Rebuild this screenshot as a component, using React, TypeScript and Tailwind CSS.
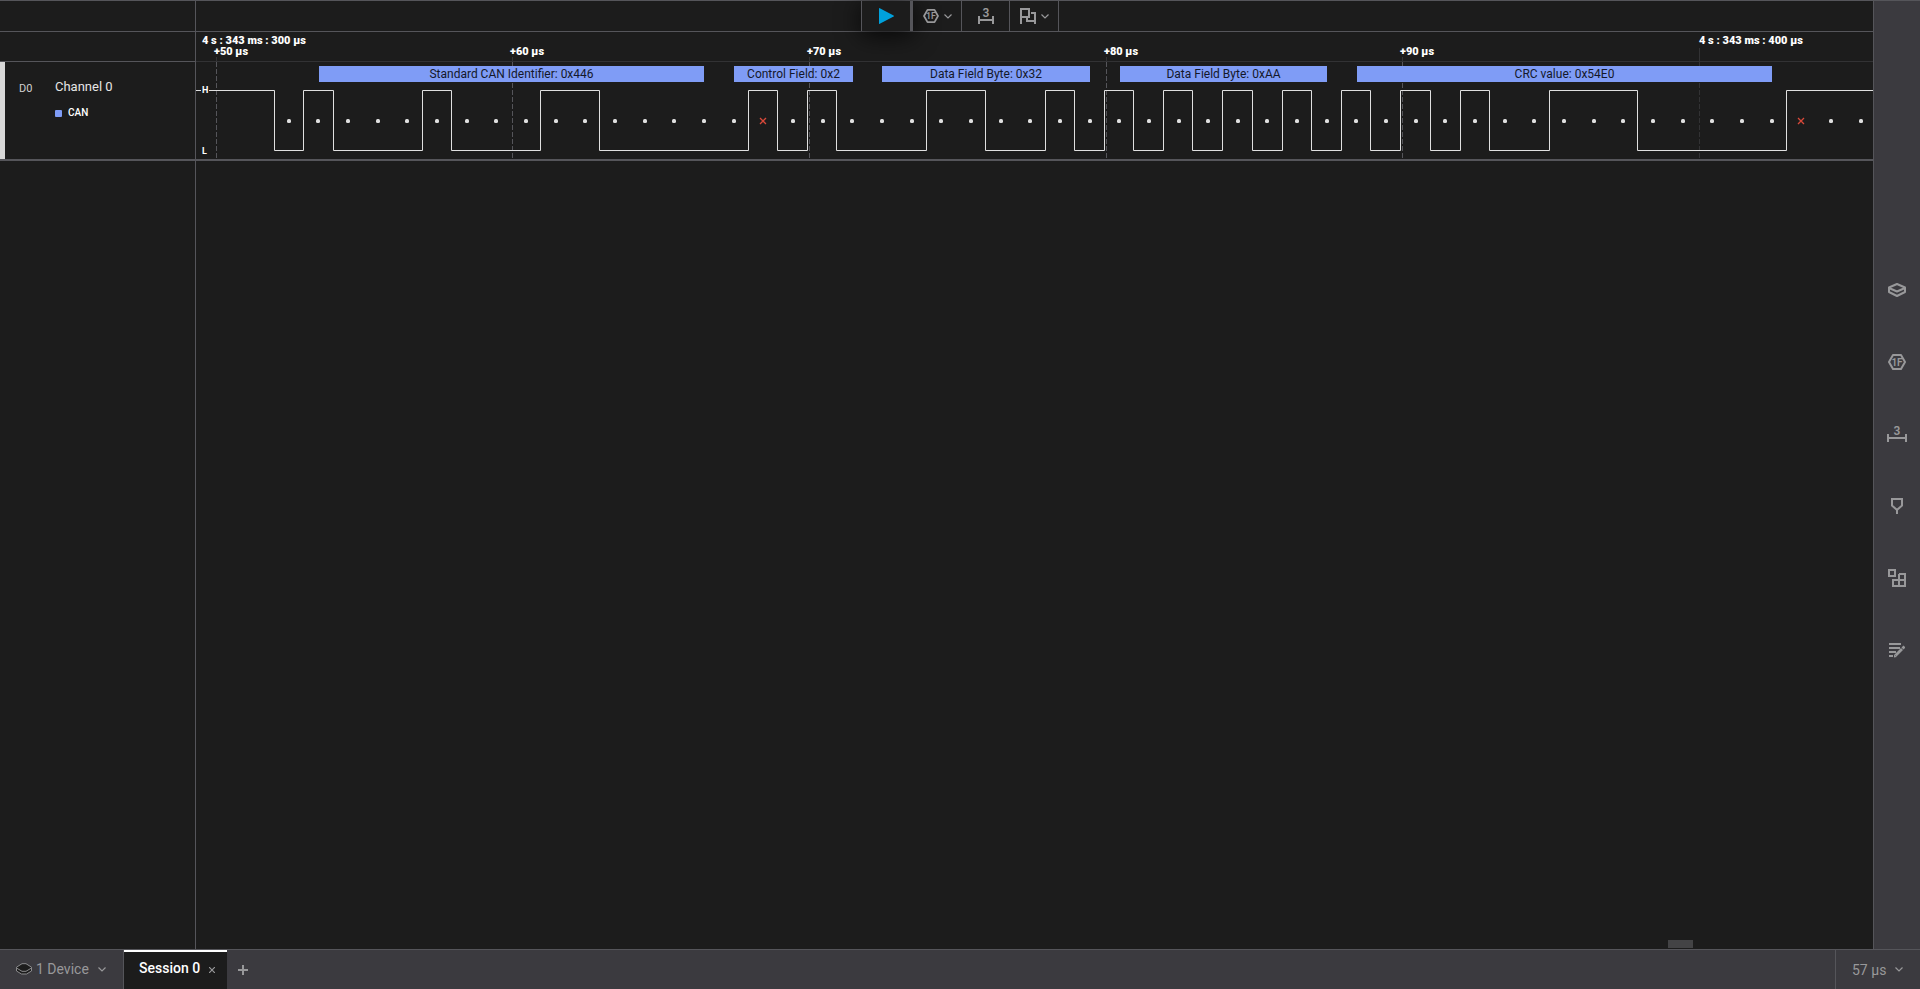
import type { ReactNode } from 'react'

// Timeline geometry, in pixels from the left edge of the trace area
const HIGH = 28
const LOW = 88
const EDGES = [
  78, 107, 137, 226, 255, 344, 403, 552, 581, 611, 640, 730, 789, 849, 878, 908, 937, 967, 996, 1026, 1056, 1086,
  1115, 1145, 1174, 1204, 1234, 1264, 1293, 1353, 1441, 1590,
]
const BIT_WIDTH = 29.66
const STUFF_BITS = [16, 51]
const SAMPLES = Array.from({ length: 54 }, (_, i) => ({
  x: Math.round(92.7 + i * BIT_WIDTH),
  stuffed: STUFF_BITS.includes(i),
}))

const TICKS = [
  { x: 20, label: '+50 µs' },
  { x: 316, label: '+60 µs' },
  { x: 613, label: '+70 µs' },
  { x: 910, label: '+80 µs' },
  { x: 1206, label: '+90 µs' },
]

const FRAMES = [
  { start: 123, end: 508, label: 'Standard CAN Identifier: 0x446' },
  { start: 538, end: 657, label: 'Control Field: 0x2' },
  { start: 686, end: 894, label: 'Data Field Byte: 0x32' },
  { start: 924, end: 1131, label: 'Data Field Byte: 0xAA' },
  { start: 1161, end: 1576, label: 'CRC value: 0x54E0' },
]

function wavePath() {
  let high = true
  let d = `M0 ${HIGH + 0.5}`
  for (const x of EDGES) {
    high = !high
    d += `H${x + 0.5}V${(high ? HIGH : LOW) + 0.5}`
  }
  return d + 'H4000'
}

export default function App() {
  return (
    <div className="flex h-screen flex-col overflow-hidden bg-[#1c1c1c] font-[Roboto,sans-serif] text-white">
      <div className="flex min-h-0 flex-1">
        <main className="flex min-w-0 flex-1 flex-col">
          <Toolbar />
          <Ruler />
          <Channel />
          <div className="flex flex-1">
            <div className="w-[196px] border-r border-[#55555a]" />
            {/* Horizontal scrollbar */}
            <div className="flex flex-1 items-end justify-end pr-[180px] pb-px">
              <div className="h-2 w-[25px] bg-[#434345]" />
            </div>
          </div>
        </main>
        <Sidebar />
      </div>
      <Footer />
    </div>
  )
}

function Toolbar() {
  return (
    <header className="flex h-8 border-y border-[#55555a]">
      <div className="w-[196px] shrink-0 border-r border-[#55555a]" />
      <div className="flex flex-1 justify-center pr-[149px]">
        <button
          aria-label="Start capture"
          className="relative z-10 flex w-[52px] items-center justify-center border-r-3 border-l border-[#55555a] bg-[#1c1c1c] pt-1 pb-2 shadow-[0_4px_24px_rgba(0,0,0,0.8)]"
        >
          <svg className="mt-1 h-4 w-[15px]" viewBox="0 0 15 16">
            <path d="M0 0.6Q0 -0.2 0.8 0.2L14.6 7.5Q15.2 8 14.6 8.5L0.8 15.8Q0 16.2 0 15.4Z" fill="#00a1dc" />
          </svg>
        </button>
        <ToolButton label="Analyzers" className="relative z-20 w-[49px]">
          <HexIcon className="h-[14px] w-4" />
          <Chevron />
        </ToolButton>
        <ToolButton label="Measurements" className="w-12">
          <MeasureIcon className="h-[18px] w-4" />
        </ToolButton>
        <ToolButton label="Markers" className="w-[49px]">
          <svg className="h-4 w-4" viewBox="0 0 16 16" fill="none" stroke="currentColor" strokeWidth="2">
            <path d="M1 16V1H9V9H1" />
            <path d="M11 5H15V16M15 13H7V10" />
          </svg>
          <Chevron />
        </ToolButton>
      </div>
    </header>
  )
}

function ToolButton({ label, className, children }: { label: string; className: string; children: ReactNode }) {
  return (
    <button
      aria-label={label}
      className={`flex items-center justify-center gap-[5px] border-r border-[#55555a] text-[#98989a] ${className}`}
    >
      {children}
    </button>
  )
}

function Ruler() {
  return (
    <div className="flex h-[30px] text-[11px] leading-3 font-black">
      <div className="w-[196px] shrink-0 border-r border-b border-[#55555a]" />
      <div className="relative flex-1 overflow-hidden border-b border-[#323234] whitespace-nowrap">
        <span className="absolute top-[3px] left-[6px]">4 s : 343 ms : 300 µs</span>
        <span className="absolute top-[3px] left-[1503px]">4 s : 343 ms : 400 µs</span>
        <span className="absolute top-4 left-[1503px] h-[14px] w-px bg-[#323234]" />
        {TICKS.map((tick) => (
          <span key={tick.x} className="absolute top-[14px] -ml-[2px]" style={{ left: tick.x }}>
            {tick.label}
          </span>
        ))}
        {TICKS.map((tick) => (
          <span key={tick.x} className="absolute bottom-0 h-1 w-px bg-[#323234]" style={{ left: tick.x }} />
        ))}
      </div>
    </div>
  )
}

function Channel() {
  return (
    <section className="flex h-[99px] border-b-2 border-[#55555a]">
      <div className="flex w-[196px] shrink-0 border-r border-l-5 border-r-[#55555a] border-l-[#d8d8d8] pt-[17px] pl-[14px]">
        <span className="w-9 pt-[2px] text-[11px] leading-4 text-[#d0d0d0]">D0</span>
        <div>
          <h2 className="text-[13px] leading-4 text-[#e6e6e6]">Channel 0</h2>
          <p className="mt-3 flex items-center gap-[6px] text-[10px] leading-3 font-medium">
            <span className="size-[7px] rounded-[1px] bg-[#7f9cf6]" />
            CAN
          </p>
        </div>
      </div>
      <div className="relative min-w-0 flex-1 overflow-hidden">
        <svg className="h-full w-full" fill="none">
          {TICKS.map((tick) => (
            <path key={tick.x} d={`M${tick.x + 0.5} 0V97`} stroke="#55555a" strokeDasharray="5 2" />
          ))}
          <path d="M1503.5 0V97" stroke="#323234" strokeDasharray="5 2" />
          <path d={wavePath()} stroke="#e0e0e0" />
          {SAMPLES.map(({ x, stuffed }) =>
            stuffed ? (
              <path key={x} d={`M${x - 3} 56l6 6m0 -6l-6 6`} stroke="#d9493a" strokeWidth="1.3" />
            ) : (
              <rect key={x} x={x - 2} y={57} width={4} height={4} rx={1.5} fill="#e0e0e0" />
            ),
          )}
        </svg>
        {/* Logic levels */}
        <span className="absolute top-[22px] left-[5px] bg-[#1c1c1c] px-px text-[9px] leading-3 font-bold">H</span>
        <span className="absolute top-[83px] left-[5px] px-px text-[9px] leading-3 font-bold">L</span>
        {/* Decoded CAN fields */}
        {FRAMES.map((frame) => (
          <div
            key={frame.start}
            className="absolute top-1 h-4 bg-[#7f9cf6] text-center text-xs leading-4 whitespace-nowrap text-[#14182a]"
            style={{ left: frame.start, width: frame.end - frame.start }}
          >
            {frame.label}
          </div>
        ))}
      </div>
    </section>
  )
}

function Sidebar() {
  return (
    <aside className="flex w-[47px] shrink-0 flex-col justify-center border-t border-l border-[#55555a] bg-[#3b3a3f] pb-[10px] text-[#98989a]">
      <SideButton label="Device settings">
        <DeviceIcon className="h-[14px] w-[18px]" />
      </SideButton>
      <SideButton label="Analyzers">
        <HexIcon className="h-4 w-[18px]" />
      </SideButton>
      <SideButton label="Measurements">
        <svg className="h-[18px] w-5" viewBox="0 0 20 18" fill="none" stroke="currentColor" strokeWidth="2">
          <path d="M1 9V17M19 9V17M1 13H19" />
          <ThreeLabel x={10} y={10} />
        </svg>
      </SideButton>
      <SideButton label="Timing markers">
        <svg className="h-4 w-3" viewBox="0 0 12 16" fill="none" stroke="currentColor" strokeWidth="2">
          <path d="M1 1H11V7.5L6 12L1 7.5ZM6 12V16" />
        </svg>
      </SideButton>
      <SideButton label="Extensions">
        <svg className="size-[18px]" viewBox="0 0 18 18" fill="none" stroke="currentColor" strokeWidth="2">
          <path d="M1 1H7V7H1ZM11 5H17V17H5V11H17M11 5V17" />
        </svg>
      </SideButton>
      <SideButton label="Notes">
        <svg className="h-4 w-4" viewBox="0 0 16 16" fill="none" stroke="currentColor">
          <path d="M0 2H12M0 6H11M0 10H7M0 14H4" strokeWidth="1.8" />
          <path d="M6.5 13.5L13 7" strokeWidth="2.8" />
          <path d="M13.5 6.5L15.5 4.5" strokeWidth="2.8" />
          <path d="M5 12.2L7.8 15L5 15.5Z" fill="currentColor" stroke="none" />
        </svg>
      </SideButton>
    </aside>
  )
}

function SideButton({ label, children }: { label: string; children: ReactNode }) {
  return (
    <button aria-label={label} className="flex h-[72px] items-center justify-center">
      {children}
    </button>
  )
}

function Footer() {
  return (
    <footer className="flex h-10 shrink-0 border-t border-[#55555a] bg-[#3b3a3f] text-sm text-[#98989a]">
      <button className="flex w-[124px] items-center border-r border-[#55555a] pb-px pl-4">
        <svg className="h-3 w-4" viewBox="0 0 16 12" fill="#1c1c1c" stroke="#8c8c8e" strokeLinejoin="round">
          <path d="M0.5 5V8L5.5 11H10.5L15.5 8V5" />
          <path d="M6 0.7H10L15.5 4.2V5L10 8.3H6L0.5 5V4.2Z" />
        </svg>
        <span className="mr-[9px] ml-1">1 Device</span>
        <Chevron />
      </button>
      <div className="flex w-[103px] items-center border-t-2 border-white bg-[#1c1c1c] pb-[6px] pl-[15px]">
        <span className="font-medium text-white">Session 0</span>
        <button aria-label="Close session" className="ml-[9px] pt-1">
          <svg className="size-[6px]" viewBox="0 0 6 6" stroke="currentColor" strokeWidth="1.2">
            <path d="M0 0L6 6M6 0L0 6" />
          </svg>
        </button>
      </div>
      <button aria-label="New session" className="flex w-8 items-center justify-center">
        <svg className="size-[10px]" viewBox="0 0 10 10" stroke="currentColor" strokeWidth="2">
          <path d="M5 0V10M0 5H10" />
        </svg>
      </button>
      <button className="ml-auto flex w-[85px] items-center gap-[9px] border-l border-[#55555a] pl-4">
        57 µs
        <Chevron />
      </button>
    </footer>
  )
}

function Chevron() {
  return (
    <svg className="h-[5px] w-2" viewBox="0 0 8 5" fill="none" stroke="currentColor" strokeWidth="1.2">
      <path d="M0.5 0.5L4 4L7.5 0.5" />
    </svg>
  )
}

function DeviceIcon({ className }: { className: string }) {
  return (
    <svg className={className} viewBox="0 0 18 14" fill="none" stroke="currentColor" strokeWidth="2" strokeLinejoin="round">
      <path d="M9 1L17 4.5V9L9 13L1 9V4.5Z" />
      <path d="M1 5L9 8.5L17 5" />
    </svg>
  )
}

function HexIcon({ className }: { className: string }) {
  return (
    <svg className={className} viewBox="0 0 18 16" fill="none" stroke="currentColor" strokeWidth="2" strokeLinejoin="round">
      <path d="M5 1H13L17 8L13 15H5L1 8Z" />
      <text x="9" y="11.5" textAnchor="middle" fontSize="10" fontWeight="600" fill="currentColor" stroke="none">
        1F
      </text>
    </svg>
  )
}

function MeasureIcon({ className }: { className: string }) {
  return (
    <svg className={className} viewBox="0 0 16 18" fill="none" stroke="currentColor" strokeWidth="2">
      <path d="M1 9V17M15 9V17M1 13H15" />
      <ThreeLabel x={8} y={10} />
    </svg>
  )
}

function ThreeLabel({ x, y }: { x: number; y: number }) {
  return (
    <text x={x} y={y} textAnchor="middle" fontSize="12" fontWeight="600" fill="currentColor" stroke="none">
      3
    </text>
  )
}
